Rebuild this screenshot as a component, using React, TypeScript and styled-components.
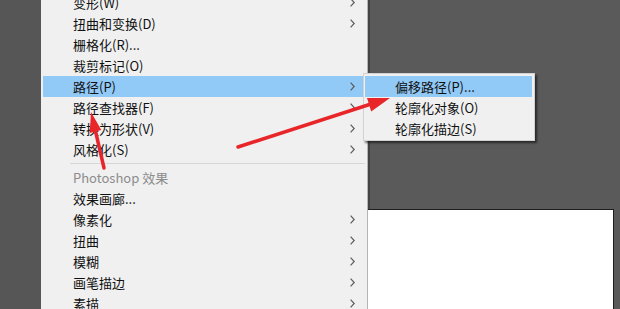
import React from "react";
import styled, { createGlobalStyle } from "styled-components";

const GlobalStyle = createGlobalStyle`
  html, body {
    margin: 0;
    padding: 0;
    background: #5a5a5a;
    overflow: hidden;
  }
`;

type MenuEntry =
  | { kind: "item"; label: string; sub?: boolean; active?: boolean }
  | { kind: "sep" }
  | { kind: "header"; label: string };

const entries: MenuEntry[] = [
  { kind: "item", label: "变形(W)", sub: true },
  { kind: "item", label: "扭曲和变换(D)", sub: true },
  { kind: "item", label: "栅格化(R)..." },
  { kind: "item", label: "裁剪标记(O)" },
  { kind: "item", label: "路径(P)", sub: true, active: true },
  { kind: "item", label: "路径查找器(F)", sub: true },
  { kind: "item", label: "转换为形状(V)", sub: true },
  { kind: "item", label: "风格化(S)", sub: true },
  { kind: "sep" },
  { kind: "header", label: "Photoshop 效果" },
  { kind: "item", label: "效果画廊..." },
  { kind: "item", label: "像素化", sub: true },
  { kind: "item", label: "扭曲", sub: true },
  { kind: "item", label: "模糊", sub: true },
  { kind: "item", label: "画笔描边", sub: true },
  { kind: "item", label: "素描", sub: true },
];

const subEntries = [
  { label: "偏移路径(P)...", active: true },
  { label: "轮廓化对象(O)" },
  { label: "轮廓化描边(S)" },
];

const Chevron = () => (
  <ChevronSvg width="5" height="9" viewBox="0 0 5 9">
    <polyline points="0.6,0.6 4.2,4.5 0.6,8.4" fill="none" stroke="#5c5c5c" strokeWidth="1.2" />
  </ChevronSvg>
);

const Arrows = () => (
  <ArrowLayer width="620" height="309" viewBox="0 0 620 309">
    <line x1="238" y1="147" x2="371" y2="104" stroke="#e8262a" strokeWidth="3.5" strokeLinecap="round" />
    <polygon points="390,98 371.2,111.5 367,98.1" fill="#e8262a" />
    <line x1="104" y1="168" x2="95" y2="129" stroke="#e8262a" strokeWidth="3.5" strokeLinecap="round" />
    <polygon points="91,112 101.3,130.1 89.7,132.9" fill="#e8262a" />
  </ArrowLayer>
);

const App = () => {
  return (
    <Stage>
      <GlobalStyle />
      <Gutter />
      <Menu>
        {entries.map((e, i) => {
          if (e.kind === "sep") return <Separator key={i} />;
          if (e.kind === "header") return <Header key={i}>{e.label}</Header>;
          return (
            <Item key={i} $active={e.active}>
              <Label>{e.label}</Label>
              {e.sub && <Chevron />}
            </Item>
          );
        })}
      </Menu>
      <Workspace>
        <Artboard />
      </Workspace>
      <SubMenu>
        {subEntries.map((s) => (
          <SubItem key={s.label} $active={s.active}>
            {s.label}
          </SubItem>
        ))}
      </SubMenu>
      <Arrows />
    </Stage>
  );
};

const Stage = styled.div`
  position: relative;
  width: 620px;
  height: 309px;
  display: flex;
  overflow: hidden;
  background: #5a5a5a;
  font-family: "Noto Sans CJK SC", "Microsoft YaHei", sans-serif;
  font-size: 13px;
  color: #111;
`;

const Gutter = styled.div`
  width: 41px;
  flex-shrink: 0;
  background: #565656;
`;

const Menu = styled.div`
  width: 322px;
  flex-shrink: 0;
  margin-top: -8px;
  padding: 0 2px;
  background: #f0f0f0;
  align-self: flex-start;
  box-shadow: 1px 0 0 #b4b4b4, 3px 0 0 #444;
`;

const Item = styled.div<{ $active?: boolean }>`
  height: 21px;
  display: flex;
  align-items: center;
  padding: 0 10px 0 30px;
  background: ${(p) => (p.$active ? "#91c9f7" : "transparent")};
`;

const Label = styled.span`
  flex: 1;
  line-height: 21px;
  white-space: nowrap;
`;

const ChevronSvg = styled.svg`
  display: block;
  flex-shrink: 0;
`;

const Separator = styled.div`
  height: 7px;
  margin-left: 27px;
  display: flex;
  align-items: center;
  &::after {
    content: "";
    flex: 1;
    height: 1px;
    background: #d7d7d7;
  }
`;

const Header = styled.div`
  height: 21px;
  line-height: 21px;
  padding-left: 30px;
  color: #8c8c8c;
`;

const Workspace = styled.div`
  flex: 1;
  padding: 209px 0 0 1px;
`;

const Artboard = styled.div`
  width: 245px;
  height: 100px;
  background: #fff;
  border-top: 1px solid #1e1e1e;
  border-right: 1px solid #1e1e1e;
`;

const SubMenu = styled.div`
  position: absolute;
  left: 363px;
  top: 73px;
  width: 167px;
  padding: 2px 2px 1px 1px;
  background: #f0f0f0;
  border: 1px solid #d2d2d2;
  box-shadow: 2px 2px 2px rgba(0, 0, 0, 0.55);
`;

const SubItem = styled.div<{ $active?: boolean }>`
  height: 21px;
  line-height: 21px;
  padding-left: 30px;
  white-space: nowrap;
  background: ${(p) => (p.$active ? "#91c9f7" : "transparent")};
`;

const ArrowLayer = styled.svg`
  position: absolute;
  left: 0;
  top: 0;
  pointer-events: none;
`;

export default App;
